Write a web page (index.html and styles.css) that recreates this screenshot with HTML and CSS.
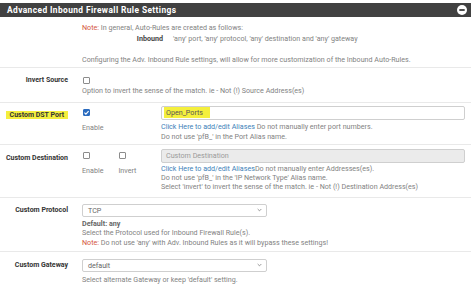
FILE: index.html
```html
<!DOCTYPE html>
<html lang="en">
<head>
<meta charset="utf-8">
<title>Advanced Inbound Firewall Rule Settings</title>
<link rel="stylesheet" href="styles.css">
</head>
<body>
<div class="panel">
  <div class="panel-head">
    <h2>Advanced Inbound Firewall Rule Settings</h2>
    <svg class="toggle" viewBox="0 0 10 10"><circle cx="5" cy="5" r="5" fill="#fff"/><rect x="2.3" y="4.1" width="5.4" height="1.8" fill="#3b3b3b"/></svg>
  </div>

  <div class="row row-note">
    <div class="label"></div>
    <div class="content">
      <p><span class="note">Note:</span> In general, Auto-Rules are created as follows:</p>
      <p class="inbound"><b>Inbound</b><span>'any' port, 'any' protocol, 'any' destination and 'any' gateway</span></p>
      <p class="spaced">Configuring the Adv. Inbound Rule settings, will allow for more customization of the Inbound Auto-Rules.</p>
    </div>
  </div>

  <div class="row row-invert">
    <div class="label">Invert Source</div>
    <div class="content">
      <div class="cbline"><span class="cb"></span></div>
      <p>Option to invert the sense of the match. ie - Not (!) Source Address(es)</p>
    </div>
  </div>

  <div class="row row-dst">
    <div class="label line14"><span class="hl-label">Custom DST Port</span></div>
    <div class="content split">
      <div class="checks">
        <div class="checkcol">
          <div class="cbline14"><span class="cb on"><svg viewBox="0 0 8 8"><path d="M1.6 4.2 L3.3 5.8 L6.4 2.3" fill="none" stroke="#fff" stroke-width="1.3"/></svg></span></div>
          <div class="cbtext">Enable</div>
        </div>
      </div>
      <div class="main">
        <div class="field"><span class="hl-input">Open_Ports</span></div>
        <div class="help">
          <p><a class="link">Click Here to add/edit Aliases</a> Do not manually enter port numbers.</p>
          <p>Do not use 'pfB_' in the Port Alias name.</p>
        </div>
      </div>
    </div>
  </div>

  <div class="row row-dest">
    <div class="label line14">Custom Destination</div>
    <div class="content split">
      <div class="checks">
        <div class="checkcol">
          <div class="cbline14"><span class="cb"></span></div>
          <div class="cbtext">Enable</div>
        </div>
        <div class="checkcol">
          <div class="cbline14"><span class="cb"></span></div>
          <div class="cbtext">Invert</div>
        </div>
      </div>
      <div class="main">
        <div class="field disabled">Custom Destination</div>
        <div class="help">
          <p><a class="link">Click Here to add/edit Aliases</a>Do not manually enter Addresses(es).</p>
          <p>Do not use 'pfB_' in the 'IP Network Type' Alias name.</p>
          <p>Select 'invert' to invert the sense of the match. ie - Not (!) Destination Address(es)</p>
        </div>
      </div>
    </div>
  </div>

  <div class="row row-proto">
    <div class="label line13">Custom Protocol</div>
    <div class="content">
      <div class="select"><span>TCP</span><svg viewBox="0 0 6 4"><path d="M0.8 0.8 L3 3 L5.2 0.8" fill="none" stroke="#666" stroke-width="0.8"/></svg></div>
      <div class="help">
        <p class="strong">Default: any</p>
        <p>Select the Protocol used for Inbound Firewall Rule(s).</p>
        <p><span class="note">Note:</span> Do not use 'any' with Adv. Inbound Rules as it will bypass these settings!</p>
      </div>
    </div>
  </div>

  <div class="row row-gw">
    <div class="label line13">Custom Gateway</div>
    <div class="content">
      <div class="select"><span>default</span><svg viewBox="0 0 6 4"><path d="M0.8 0.8 L3 3 L5.2 0.8" fill="none" stroke="#666" stroke-width="0.8"/></svg></div>
      <div class="help">
        <p>Select alternate Gateway or keep 'default' setting.</p>
      </div>
    </div>
  </div>
</div>
</body>
</html>
```

FILE: styles.css
```css
* { box-sizing: border-box; margin: 0; padding: 0; }

html, body {
  width: 474px;
  height: 286px;
  overflow: hidden;
  background: #fff;
}

body {
  font-family: Roboto, "Liberation Sans", sans-serif;
  font-size: 7.15px;
  color: #828282;
}

.panel {
  margin: 3px 3px 0 0;
}

.panel-head {
  height: 14px;
  background: #414141;
  display: flex;
  align-items: center;
  justify-content: space-between;
  padding: 0 4px 0 7px;
}

.panel-head h2 {
  font-size: 8.4px;
  font-weight: 700;
  color: #fff;
  letter-spacing: 0.4px;
  line-height: 14px;
}

.toggle {
  width: 10px;
  height: 10px;
  display: block;
}

.row {
  display: grid;
  grid-template-columns: 68px 1fr;
  column-gap: 14px;
  border-top: 1px solid #e9e9e9;
  padding-right: 6px;
}

.label {
  text-align: right;
  font-weight: 700;
  font-size: 7px;
  color: #333;
  white-space: nowrap;
}

.content p { line-height: 9.6px; white-space: nowrap; }

.note { color: #d4553e; }

.link { color: #3d7fb8; }

.strong { font-weight: 700; color: #666; }

/* note row */
.row-note { border-top: none; padding-top: 6px; padding-bottom: 2px; }
.row-note p { line-height: 10.5px; }
.row-note .inbound b { display: inline-block; width: 91px; text-align: right; padding-right: 10px; color: #444; }
.row-note .spaced { margin-top: 10.5px; }

/* invert source */
.row-invert { padding-top: 6px; padding-bottom: 6px; }
.row-invert .label { line-height: 12px; }
.cbline { height: 12px; display: flex; align-items: center; }

.cb {
  display: inline-block;
  width: 7px;
  height: 7px;
  border: 1px solid #8c8c8c;
  border-radius: 1px;
  background: #fff;
  margin-left: 1px;
}
.cb.on {
  background: #2b6cbf;
  border-color: #2b6cbf;
  position: relative;
}
.cb.on svg { position: absolute; left: -1px; top: -1px; width: 7px; height: 7px; }

.line14 { line-height: 14px; }
.line13 { line-height: 13px; }

.split { display: flex; }
.checks { width: 79px; display: flex; gap: 15px; }
.checkcol { display: flex; flex-direction: column; }
.cbline14 { height: 14px; display: flex; align-items: center; }
.cbtext { margin-top: 3px; line-height: 10px; }
.main { flex: 1; }

.field {
  height: 14px;
  border: 1px solid #cfcfcf;
  border-radius: 2px;
  display: flex;
  align-items: center;
  padding: 0 2px;
  color: #666;
}
.field.disabled { background: #ebebeb; color: #9a9a9a; padding-left: 4px; }

.hl-label { background: #f4ef3d; padding: 0 4px; }
.hl-input { background: #f4ef3d; padding: 1px 7px 1px 2px; color: #555; }

.help { margin-top: 1px; }

/* DST */
.row-dst { padding-top: 3px; padding-bottom: 2px; }
.row-dst .label { padding-top: 2px; }
.row-dst .help { margin-top: 2px; }
.row-dst .help p { line-height: 10px; }

/* dest */
.row-dest { padding-top: 4px; padding-bottom: 5px; }
.row-dest .label { padding-top: 2px; }
.row-dest .help p { line-height: 9.4px; }

/* protocol */
.select {
  width: 185px;
  height: 13px;
  border: 1px solid #cfcfcf;
  border-radius: 2px;
  display: flex;
  align-items: center;
  justify-content: space-between;
  padding: 0 4px 0 5px;
  color: #666;
}
.select svg { width: 5px; height: 4px; display: block; }

.row-proto { padding-top: 6px; padding-bottom: 3px; }
.row-proto .help { margin-top: 2px; }

.row-gw { padding-top: 7px; }
.row-gw .help { margin-top: 3px; }
```
